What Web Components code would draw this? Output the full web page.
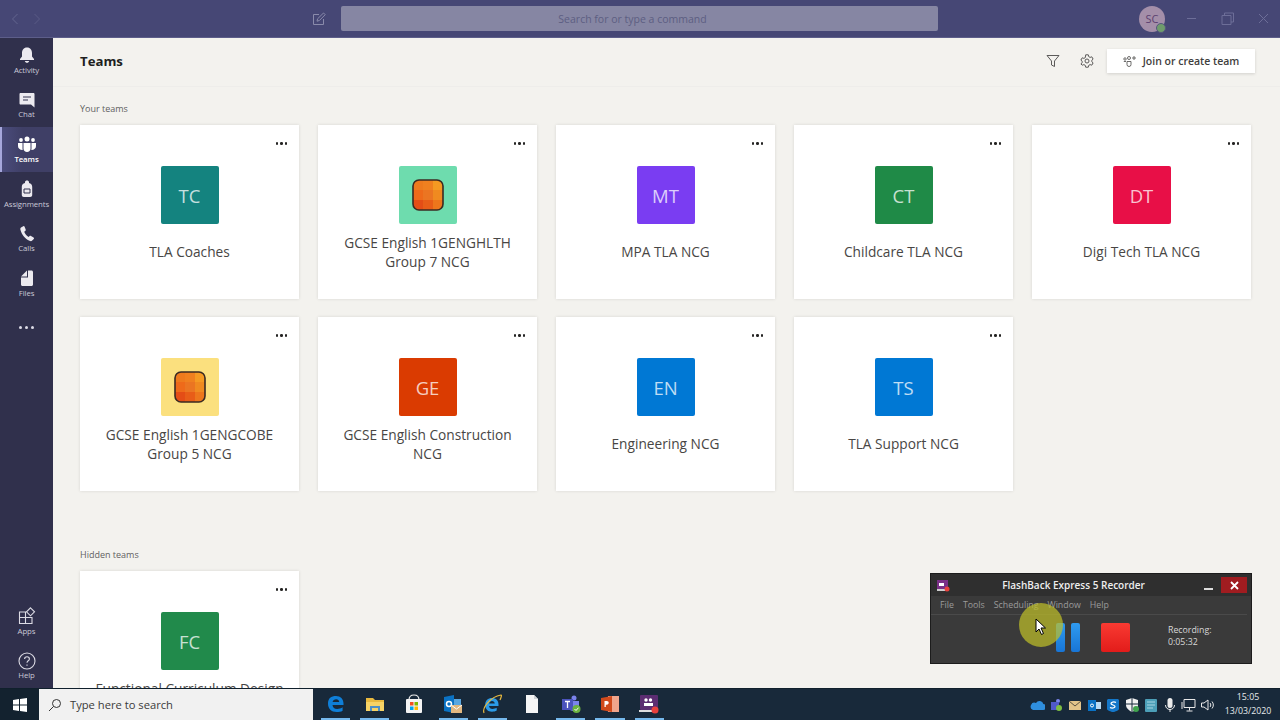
<!DOCTYPE html>
<html>
<head>
<meta charset="utf-8">
<title>Teams</title>
<style>
    html, body { margin: 0; height: 100%; overflow: hidden; }
    body {
        width: 1280px;
        height: 720px;
        position: relative;
        display: grid;
        grid-template-rows: 38px 650px 32px;
        font-family: "Open Sans", "Noto Sans", sans-serif;
    }
    .middle { display: flex; min-height: 0; }
</style>
</head>
<body>
<title-bar></title-bar>
<div class="middle">
    <app-rail>
        <rail-item label="Activity"><svg width="18" height="18" viewBox="0 0 18 18" fill="#eceaf0"><path d="M9 1.500c-3.400 0-5 2.500-5 5.500v3.500L2 13v1h14v-1l-2-2.500V7c0-3-1.600-5.500-5-5.500z"/><path d="M6.800 15h4.400c-.3 1.200-1.100 1.800-2.200 1.800S7.100 16.200 6.800 15z"/></svg></rail-item>
        <rail-item label="Chat"><svg width="18" height="18" viewBox="0 0 18 18"><path fill="#eceaf0" d="M2.500 2h13c.5 0 1 .5 1 1v13.500L13 13.500H2.500c-.5 0-1-.5-1-1V3c0-.5.500-1 1-1z"/><path stroke="#33334f" stroke-width="1.100" d="M5 6h8M5 9h5"/></svg></rail-item>
        <rail-item label="Teams" active><svg width="20" height="18" viewBox="0 0 20 18" fill="#fff"><circle cx="10" cy="4" r="2.500"/><circle cx="4" cy="5" r="1.900"/><circle cx="16" cy="5" r="1.900"/><path d="M6.500 8h7v5.500c0 2-1.500 3.500-3.500 3.500s-3.500-1.500-3.500-3.500z"/><path d="M1 8h4.500v5.500c0 .6.100 1 .2 1.400C3 15 1 13.500 1 11zM19 8h-4.500v5.500c0 .6-.1 1-.2 1.400 2.700.1 4.700-1.400 4.700-3.900z"/></svg></rail-item>
        <rail-item label="Assignments"><svg width="18" height="18" viewBox="0 0 18 18"><path fill="#eceaf0" d="M7 3V2c0-.8.900-1.500 2-1.500s2 .7 2 1.500v1c2 .4 3.200 1.800 3.200 3.800V15c0 1.200-.8 2-2 2H5.800c-1.200 0-2-.8-2-2V6.800C3.800 4.800 5 3.400 7 3z"/><path fill="none" stroke="#33334f" d="M6 9h6v4H6z"/></svg></rail-item>
        <rail-item label="Calls"><svg width="18" height="18" viewBox="0 0 18 18" fill="#eceaf0"><path d="M5.300 1.200 3 2.600c-.7.500-.8 1.400-.5 2.400 1.300 4.700 4.600 8.800 9 10.800 1.100.5 2 .5 2.700-.2l1.600-1.700c.4-.5.300-1-.2-1.400l-2.600-1.600c-.5-.3-1-.2-1.400.2l-.9 1c-2.100-1.200-3.700-3.200-4.500-5.400l1.100-.8c.5-.4.600-.9.400-1.400L6.500 1.600c-.3-.5-.8-.7-1.200-.4z"/></svg></rail-item>
        <rail-item label="Files"><svg width="18" height="18" viewBox="0 0 18 18" fill="#eceaf0"><path d="M3 7.500 9 1.500v6z"/><path d="M10 1.500h3.500c.8 0 1.500.7 1.500 1.500v12.500c0 .8-.7 1.500-1.500 1.500h-9C3.700 17 3 16.300 3 15.500V8.500h7z"/></svg></rail-item>
        <rail-item dots></rail-item>
        <rail-item slot="bottom" label="Apps"><svg width="20" height="18" viewBox="0 0 20 18" fill="none" stroke="#dcdbe4" stroke-width="1.100"><path d="M2.500 5h6v5.500h-6zM8.500 10.500h6.500v6H8.500zM2.500 10.500h6v6h-6z"/><path d="M13.500 .8l4 4-4 4-4-4z"/></svg></rail-item>
        <rail-item slot="bottom" label="Help"><svg width="18" height="18" viewBox="0 0 18 18" fill="none" stroke="#dcdbe4" stroke-width="1.100"><circle cx="9" cy="9" r="8"/><path d="M6.600 7c0-1.400 1.100-2.300 2.400-2.300s2.400.9 2.400 2.200c0 1.900-2.400 1.900-2.400 3.800"/><path d="M9 12.600v1.200"/></svg></rail-item>
    </app-rail>
    <teams-page>
        <team-section heading="Your teams">
            <team-card name="TLA Coaches" initials="TC" color="#14837f"></team-card>
            <team-card name="GCSE English 1GENGHLTH Group 7 NCG" color="#6edcae" pattern></team-card>
            <team-card name="MPA TLA NCG" initials="MT" color="#7a3df2"></team-card>
            <team-card name="Childcare TLA NCG" initials="CT" color="#1f8a47"></team-card>
            <team-card name="Digi Tech TLA NCG" initials="DT" color="#e80f47"></team-card>
            <team-card name="GCSE English 1GENGCOBE Group 5 NCG" color="#fbe07e" pattern></team-card>
            <team-card name="GCSE English Construction NCG" initials="GE" color="#da3b01"></team-card>
            <team-card name="Engineering NCG" initials="EN" color="#0078d4"></team-card>
            <team-card name="TLA Support NCG" initials="TS" color="#0078d4"></team-card>
        </team-section>
        <team-section heading="Hidden teams" class="hidden-teams">
            <team-card name="Functional Curriculum Design NCG" initials="FC" color="#218a4b"></team-card>
        </team-section>
    </teams-page>
</div>
<task-bar></task-bar>
<recorder-window></recorder-window>

<script>
const sheetFont = '"Open Sans", "Noto Sans", sans-serif';

class TitleBar extends HTMLElement {
    constructor() {
        super();
        this.attachShadow({ mode: 'open' });
    }
    connectedCallback() {
        this.shadowRoot.innerHTML = `
            <style>
                :host { display: flex; align-items: center; background: #464775; height: 38px; box-sizing: border-box; border-bottom: 1px solid #5d5e8a; }
                .nav { display: flex; gap: 14px; margin-left: 11px; width: 301px; }
                .compose { width: 14px; height: 14px; margin-right: 15px; }
                .search { width: 597px; height: 25px; box-sizing: border-box; padding-right: 14px; background: #8686a3; border-radius: 2px; display: flex; align-items: center; justify-content: center; font: 10.500px ${sheetFont}; color: #5d5e82; }
                .spacer { flex: 1; }
                .avatar { width: 26px; height: 26px; border-radius: 50%; background: #a48fa9; color: #5c3f70; font: 11px/26px ${sheetFont}; text-align: center; position: relative; margin-right: 8px; }
                .avatar i { position: absolute; right: -1px; bottom: -1px; width: 8px; height: 8px; border-radius: 50%; background: #6f9c6c; border: 1px solid #55577f; }
                .win { width: 36px; display: flex; justify-content: center; }
                .win:last-child { margin-right: -1px; }
            </style>
            <div class="nav">
                <svg width="8" height="12" viewBox="0 0 8 12" fill="none" stroke="#63658f" stroke-width="1"><path d="M6.500 1 1.500 6l5 5"/></svg>
                <svg width="8" height="12" viewBox="0 0 8 12" fill="none" stroke="#5a5b86" stroke-width="1"><path d="M1.500 1l5 5-5 5"/></svg>
            </div>
            <svg class="compose" viewBox="0 0 14 14" fill="none" stroke="#8a8bab" stroke-width="1"><path d="M7 2.500H1.500v10h10V7"/><path d="M5 9.200l.6-2.400L11.500 1l1.700 1.700-5.800 5.800z"/></svg>
            <div class="search">Search for or type a command</div>
            <div class="spacer"></div>
            <div class="avatar">SC<i></i></div>
            <div class="win"><svg width="11" height="11" viewBox="0 0 11 11" stroke="#6d6e98"><path d="M1 5.500h9"/></svg></div>
            <div class="win"><svg width="13" height="13" viewBox="0 0 13 13" fill="none" stroke="#6d6e98"><path d="M1 3.500h9v9H1zM3.500 3.500V1h9v9H10"/></svg></div>
            <div class="win"><svg width="11" height="11" viewBox="0 0 11 11" stroke="#6d6e98"><path d="M1 1l9 9M10 1l-9 9"/></svg></div>
        `;
    }
}

class AppRail extends HTMLElement {
    constructor() {
        super();
        this.attachShadow({ mode: 'open' });
        this.shadowRoot.innerHTML = `
            <style>
                :host { display: flex; flex-direction: column; justify-content: space-between; width: 53px; background: #30304c; flex: none; }
            </style>
            <div><slot></slot></div>
            <div><slot name="bottom"></slot></div>
        `;
    }
}

class RailItem extends HTMLElement {
    constructor() {
        super();
        this.attachShadow({ mode: 'open' });
    }
    connectedCallback() {
        const dots = this.hasAttribute('dots');
        this.shadowRoot.innerHTML = `
            <style>
                :host { display: flex; flex-direction: column; align-items: center; justify-content: center; height: 44.600px; box-sizing: border-box; color: #c9c8d6; font: 7.800px/10px ${sheetFont}; }
                :host([active]) { background: linear-gradient(90deg, #4b4c7c, #3f3f66 40%); border-left: 2px solid #a6a7dc; color: #fff; font-weight: 600; padding-right: 2px; }
                .icon { height: 19px; display: flex; align-items: center; }
                span { letter-spacing: -.1px; white-space: nowrap; }
                .dots { display: flex; gap: 3px; }
                .dots i { width: 3px; height: 3px; border-radius: 50%; background: #dcdbe6; }
            </style>
            ${dots
                ? '<div class="dots"><i></i><i></i><i></i></div>'
                : `<div class="icon"><slot></slot></div><span>${this.getAttribute('label')}</span>`}
        `;
    }
}

class TeamsPage extends HTMLElement {
    constructor() {
        super();
        this.attachShadow({ mode: 'open' });
        this.shadowRoot.innerHTML = `
            <style>
                :host { display: block; flex: 1; background: #f3f2ee; overflow: hidden; color: #252423; }
                header { height: 49px; box-sizing: border-box; border-bottom: 1px solid #eeedea; display: flex; align-items: center; padding: 0 25px 2px 27px; }
                h1 { font: 700 13.200px ${sheetFont}; margin: 0; flex: 1; color: #201f1e; }
                .tool { width: 14px; height: 14px; margin-right: 20px; }
                .tool.gear { margin-right: 13px; }
                button { width: 148px; height: 24px; background: #fff; border: 0; box-shadow: 0 1px 3px rgba(0,0,0,.14); display: flex; align-items: center; justify-content: center; gap: 6px; font: 600 10.500px ${sheetFont}; color: #3f3e3d; padding: 0; }
                main { padding: 14px 28px 0 27px; }
            </style>
            <header>
                <h1>Teams</h1>
                <svg class="tool" viewBox="0 0 14 14" fill="none" stroke="#5c5b5a"><path d="M1 1.500h12L8.500 7v5.500l-3-1.500V7z"/></svg>
                <svg class="tool gear" viewBox="0 0 14 14" fill="none" stroke="#5c5b5a"><path d="M5.700 .8h2.600l.4 1.800 1.400.8 1.700-.6 1.300 2.300-1.300 1.200v1.400l1.300 1.200-1.300 2.300-1.700-.6-1.400.8-.4 1.800H5.700l-.4-1.800-1.400-.8-1.700.6L.9 9.900l1.300-1.200V7.300L.9 6.100l1.300-2.300 1.700.6 1.400-.8z"/><circle cx="7" cy="7" r="2"/></svg>
                <button>
                    <svg width="14" height="12" viewBox="0 0 14 12" fill="none" stroke="#5c5b5a" stroke-width=".9"><circle cx="6" cy="3" r="1.500"/><circle cx="2" cy="4" r="1.200"/><path d="M4 6.500h4v3a2 2 0 0 1-4 0zM.8 6.500H3M11 1v4M9 3h4"/></svg>
                    Join or create team
                </button>
            </header>
            <main><slot></slot></main>
        `;
    }
}

class TeamSection extends HTMLElement {
    constructor() {
        super();
        this.attachShadow({ mode: 'open' });
    }
    connectedCallback() {
        this.shadowRoot.innerHTML = `
            <style>
                :host { display: block; }
                :host(.hidden-teams) { margin-top: 56px; }
                h2 { font: 400 9px/15px ${sheetFont}; color: #616161; margin: 0 0 9px; }
                .grid { display: grid; grid-template-columns: repeat(5, 219px); grid-auto-rows: 174px; column-gap: 19px; row-gap: 18px; }
            </style>
            <h2>${this.getAttribute('heading')}</h2>
            <div class="grid"><slot></slot></div>
        `;
    }
}

class TeamCard extends HTMLElement {
    constructor() {
        super();
        this.attachShadow({ mode: 'open' });
    }
    connectedCallback() {
        const color = this.getAttribute('color');
        const pattern = `
            <svg width="32" height="32" viewBox="0 0 32 32">
                <defs><clipPath id="r"><rect x="1" y="1" width="30" height="30" rx="6"/></clipPath></defs>
                <g clip-path="url(#r)">
                    <rect width="32" height="32" fill="#ee6a1a"/>
                    <rect x="0" y="0" width="11" height="11" fill="#ee7a1d"/>
                    <rect x="11" y="0" width="10" height="11" fill="#f0801f"/>
                    <rect x="21" y="0" width="11" height="11" fill="#f59a22"/>
                    <rect x="11" y="11" width="10" height="10" fill="#eb7522"/>
                    <rect x="21" y="11" width="11" height="10" fill="#f08a20"/>
                    <rect x="0" y="21" width="11" height="11" fill="#e44d16"/>
                    <rect x="11" y="21" width="10" height="11" fill="#e85d18"/>
                    <rect x="21" y="21" width="11" height="11" fill="#ed761c"/>
                </g>
                <rect x="1" y="1" width="30" height="30" rx="6" fill="none" stroke="#3b2a22" stroke-width="1.600"/>
            </svg>`;
        this.shadowRoot.innerHTML = `
            <style>
                :host { display: block; background: #fff; box-shadow: 0 0 3px rgba(0,0,0,.12); position: relative; text-align: center; padding: 41px 10px 0; box-sizing: border-box; min-width: 0; }
                .more { position: absolute; top: 17px; right: 12px; display: flex; gap: 2px; }
                .more i { width: 2.500px; height: 2.500px; background: #252423; border-radius: 50%; }
                .tile { width: 58px; height: 58px; margin: 0 auto; border-radius: 2px; background: ${color}; display: flex; align-items: center; justify-content: center; color: rgba(255,255,255,.75); font: 18.500px ${sheetFont}; }
                .name { font: 13.700px/18.500px ${sheetFont}; color: #484644; margin-top: 10px; height: 37px; display: flex; align-items: center; justify-content: center; }
                .name span { display: block; }
            </style>
            <div class="more"><i></i><i></i><i></i></div>
            <div class="tile">${this.hasAttribute('pattern') ? pattern : this.getAttribute('initials')}</div>
            <div class="name"><span>${this.getAttribute('name')}</span></div>
        `;
    }
}

class TaskBar extends HTMLElement {
    constructor() {
        super();
        this.attachShadow({ mode: 'open' });
    }
    connectedCallback() {
        const apps = [
            ['<path d="M11 3c4.500 0 7.500 3 7.500 7.500v1.500H7.500c.3 2.600 2 3.900 4.600 3.900 2 0 4-.6 5.500-1.600v3.400c-1.600 1-3.700 1.400-6 1.400-5.300 0-8.600-3.200-8.600-8.500S6.200 3 11 3zm3.200 6C14 7.300 12.900 6.300 11.200 6.300 9.400 6.300 8 7.300 7.600 9z" fill="#0f7fd8"/>', true],
            ['<path d="M2 5h7l2 2h9v11H2z" fill="#e8b93f"/><path d="M2 9h18v9H2z" fill="#f6d265"/><path d="M6 13h10v5h-2v-3H8v3H6z" fill="#4d8fc4"/>', true],
            ['<path d="M6 7c0-3 2-5 5-5s5 2 5 5" fill="none" stroke="#eee" stroke-width="1.200"/><rect x="3" y="6" width="16" height="14" rx="1" fill="#f4f4f4"/><path d="M7 9h3.500v3.500H7z" fill="#f25022"/><path d="M11.500 9H15v3.500h-3.500z" fill="#7fba00"/><path d="M7 13.500h3.500V17H7z" fill="#00a4ef"/><path d="M11.500 13.500H15V17h-3.500z" fill="#ffb900"/>', false],
            ['<path d="M2 4l10-2v18L2 18z" fill="#0a72c4"/><circle cx="7" cy="11" r="2.500" fill="none" stroke="#fff" stroke-width="1.500"/><path d="M12 6h7v6h-7z" fill="#5aa7e0"/><path d="M9 12h11v8H9z" fill="#e3b881"/><path d="M9 12l5.500 4 5.500-4" fill="none" stroke="#fff"/>', true],
            ['<path d="M11 5c4 0 6.500 2.500 6.500 6.500v1.500H8c.3 2 1.500 3 3.500 3 1.600 0 3-.5 4.200-1.200v2.800c-1.200.8-2.800 1.200-4.700 1.200-4.200 0-6.800-2.800-6.800-7S7 5 11 5zm2.800 5.500C13.600 9 12.600 8 11 8 9.500 8 8.400 9 8.100 10.500z" fill="#2b9be8"/><path d="M3 20C1 15 9 4 20 2c1-.2 0 3-1 5" fill="none" stroke="#e8b93f" stroke-width="1.200"/>', true],
            ['<path d="M5 2h8l4 4v14H5z" fill="#f5f5f5"/><path d="M13 2v4h4z" fill="#cfd3d6"/>', false],
            ['<circle cx="14" cy="5" r="2.500" fill="#7b83eb"/><path d="M9 8h10v7c0 2-2 3-5 3s-5-1-5-3z" fill="#7b83eb"/><path d="M2 6h11v11H2z" fill="#4b53bc"/><path d="M5 8.500h5M7.500 8.500V15" stroke="#fff" stroke-width="1.300"/><circle cx="16.500" cy="16" r="4" fill="#6cb33f"/><path d="M14.500 16l1.500 1.500 2.500-2.800" fill="none" stroke="#fff"/>', true],
            ['<path d="M9 3h11v16H9z" fill="#f0a58c"/><path d="M2 5l11-2v16L2 17z" fill="#d04a1c"/><path d="M5.500 14V8h2.300c1.200 0 1.900.7 1.900 1.800S9 11.700 7.800 11.700H6.800V14z" fill="#fff"/>', true],
            ['<rect x="2" y="2" width="18" height="15" rx="1" fill="#5c2d72"/><path d="M1 17h18v2H1z" fill="#ddd"/><circle cx="8" cy="7" r="1.700" fill="#fff"/><circle cx="12.500" cy="7" r="1.700" fill="#fff"/><path d="M6 10h9v3H6z" fill="#fff"/><circle cx="17" cy="17" r="3.500" fill="#e8403c"/>', true]
        ];
        const tray = [
            '<path d="M4 13h10a3 3 0 0 0 .4-6 4 4 0 0 0-7.400-1A3.600 3.600 0 0 0 4 13z" fill="#2f8fde"/>',
            '<circle cx="10" cy="4" r="2" fill="#7b83eb"/><path d="M3 5h8v8H3z" fill="#5059c9"/><circle cx="11" cy="11" r="3" fill="#7ebd42"/>',
            '<path d="M2 4h12v9H2z" fill="#e3c48a"/><path d="M2 4l6 5 6-5" fill="none" stroke="#5b5240"/>',
            '<path d="M2 3h8v11H2z" fill="#0a72c4"/><path d="M10 5h5v7h-5z" fill="#b8dbf4"/><circle cx="6" cy="8.500" r="1.500" fill="none" stroke="#fff"/>',
            '<path d="M3 2h10l1 1v9c0 1-4 3-6 3s-6-2-6-3V3z" fill="#1477c9"/><path d="M11 5.500C9 4.500 6 5 6 6.500S10 8 10 9.500 7 11.500 5 10.500" fill="none" stroke="#fff" stroke-width="1.300"/>',
            '<path d="M8 1l6 2v5c0 3-3 5.500-6 7-3-1.500-6-4-6-7V3z" fill="#f1f1f1"/><path d="M8 1v14M2 7h12" stroke="#16293a"/><circle cx="12" cy="12" r="3" fill="#3fa34d"/>',
            '<rect x="2" y="2" width="12" height="13" rx="1" fill="#4c9fb8"/><path d="M4 5h8M4 8h8M4 11h6" stroke="#a8d6e3"/>',
            '<rect x="5.500" y="1" width="5" height="10" rx="2.500" fill="#ececec"/><path d="M3.500 8c0 6 9 6 9 0M8 12.500V15" fill="none" stroke="#ececec"/>',
            '<path d="M3 2.500h11v8H3zM8.500 10.500v3M5.500 14h6M1 5v7" fill="none" stroke="#e8e8e8"/>',
            '<path d="M1.500 6h2.500L8 3v10L4 10H1.500z" fill="none" stroke="#e8e8e8"/><path d="M10 6c1 1 1 3 0 4M12 4.500c1.800 2 1.800 5 0 7" fill="none" stroke="#e8e8e8"/>'
        ];
        this.shadowRoot.innerHTML = `
            <style>
                :host { display: flex; align-items: stretch; height: 32px; background: #18293a; border-top: 1px solid #10202c; box-sizing: border-box; position: relative; z-index: 1; color: #eee; }
                .start { width: 39px; display: flex; align-items: center; justify-content: center; background: #13222f; }
                .search { width: 274px; background: #f1f1f1; display: flex; align-items: center; gap: 8px; padding-left: 9px; box-sizing: border-box; font: 11.200px ${sheetFont}; color: #3a3a3a; margin-right: 3px; }
                .app { width: 39.200px; display: flex; align-items: center; justify-content: center; position: relative; padding-bottom: 2px; box-sizing: border-box; }
                .app.on::after { content: ""; position: absolute; left: 5px; right: 5px; bottom: 0; height: 2px; background: #76b9ed; }
                .app:last-of-type { background: #3b4a59; }
                .spacer { flex: 1; }
                .tray { display: flex; align-items: center; gap: 3px; margin-right: 2px; }
                .tray svg { display: block; }
                .clock { width: 62px; text-align: center; margin-left: -1px; padding-top: 1px; font: 8.800px/14px ${sheetFont}; color: #e6e9ec; margin-right: 1px; }
            </style>
            <div class="start"><svg width="14" height="14" viewBox="0 0 14 14" fill="#fff"><path d="M0 2l6-.9V6.500H0zM7 1l7-1v6.500H7zM0 7.500h6v5.400L0 12zM7 7.500h7V14l-7-1z"/></svg></div>
            <div class="search">
                <svg width="14" height="14" viewBox="0 0 14 14" fill="none" stroke="#333" stroke-width="1"><circle cx="8.500" cy="5.500" r="4"/><path d="M5.500 8.500l-4.500 4.500"/></svg>
                Type here to search
            </div>
            ${apps.map(a => `<div class="app${a[1] ? ' on' : ''}"><svg width="22" height="22" viewBox="0 0 22 22">${a[0]}</svg></div>`).join('')}
            <div class="spacer"></div>
            <div class="tray">${tray.map(t => `<svg width="16" height="16" viewBox="0 0 16 16">${t}</svg>`).join('')}</div>
            <div class="clock">15:05<br>13/03/2020</div>
        `;
    }
}

class RecorderWindow extends HTMLElement {
    constructor() {
        super();
        this.attachShadow({ mode: 'open' });
        this.shadowRoot.innerHTML = `
            <style>
                :host { position: absolute; left: 930px; top: 573px; width: 322px; height: 91px; box-sizing: border-box; background: #3a3a3a; border: 1px solid #1c1c1c; color: #9b9b9b; font-family: ${sheetFont}; z-index: 2; display: block; }
                .title { height: 22px; background: #2f2f2f; display: flex; align-items: center; position: relative; color: #eee; font: 600 10px ${sheetFont}; justify-content: center; padding-right: 35px; }
                .logo { position: absolute; left: 5px; top: 5px; }
                .min { position: absolute; right: 38px; bottom: 6px; width: 9px; height: 2px; background: #ddd; }
                .close { position: absolute; right: 4px; top: 3px; width: 26px; height: 16px; background: #a01c20; display: flex; align-items: center; justify-content: center; }
                nav { display: flex; gap: 9px; padding: 2px 0 2px 9px; height: 14px; align-items: center; font: 8.800px ${sheetFont}; border-bottom: 1px solid #4a4a4a; margin: 0 4px 0 0; }
                .controls { display: flex; align-items: center; height: 44px; padding-left: 125px; }
                .bar { width: 9px; height: 29px; background: linear-gradient(#2f9bf0, #1875d6); border-radius: 2px; margin-right: 6px; }
                .stop { width: 29px; height: 29px; background: linear-gradient(#f93a32, #e21c1a); border-radius: 2px; margin-left: 15px; }
                .status { font: 8.800px/12.500px ${sheetFont}; color: #d8d8d8; margin: -2px 0 0 38px; }
                .spot { position: absolute; left: 88px; top: 29px; width: 44px; height: 44px; border-radius: 50%; background: rgba(190,190,40,.72); }
                .cursor { position: absolute; left: 104px; top: 44px; }
            </style>
            <div class="title">
                <svg class="logo" width="14" height="13" viewBox="0 0 14 13"><rect x="1" y="1" width="11" height="9" fill="#7a2f86"/><path d="M3 4h5v3H3z" fill="#fff"/><path d="M1 10h10v2H1z" fill="#ccc"/><circle cx="11" cy="10" r="2.500" fill="#e8403c"/></svg>
                FlashBack Express 5 Recorder
                <i class="min"></i>
                <div class="close"><svg width="9" height="9" viewBox="0 0 9 9" stroke="#fff" stroke-width="1.800"><path d="M1 1l7 7M8 1L1 8"/></svg></div>
            </div>
            <nav><span>File</span><span>Tools</span><span>Scheduling</span><span>Window</span><span>Help</span></nav>
            <div class="controls">
                <div class="bar"></div><div class="bar"></div>
                <div class="stop"></div>
                <div class="status">Recording:<br>0:05:32</div>
            </div>
            <div class="spot"></div>
            <svg class="cursor" width="12" height="18" viewBox="0 0 12 18"><path d="M1 1v13l3-3 2.500 5.500 2-1L6 10h4.500z" fill="#fff" stroke="#000"/></svg>
        `;
    }
}

customElements.define('title-bar', TitleBar);
customElements.define('app-rail', AppRail);
customElements.define('rail-item', RailItem);
customElements.define('teams-page', TeamsPage);
customElements.define('team-section', TeamSection);
customElements.define('team-card', TeamCard);
customElements.define('task-bar', TaskBar);
customElements.define('recorder-window', RecorderWindow);
</script>
</body>
</html>
